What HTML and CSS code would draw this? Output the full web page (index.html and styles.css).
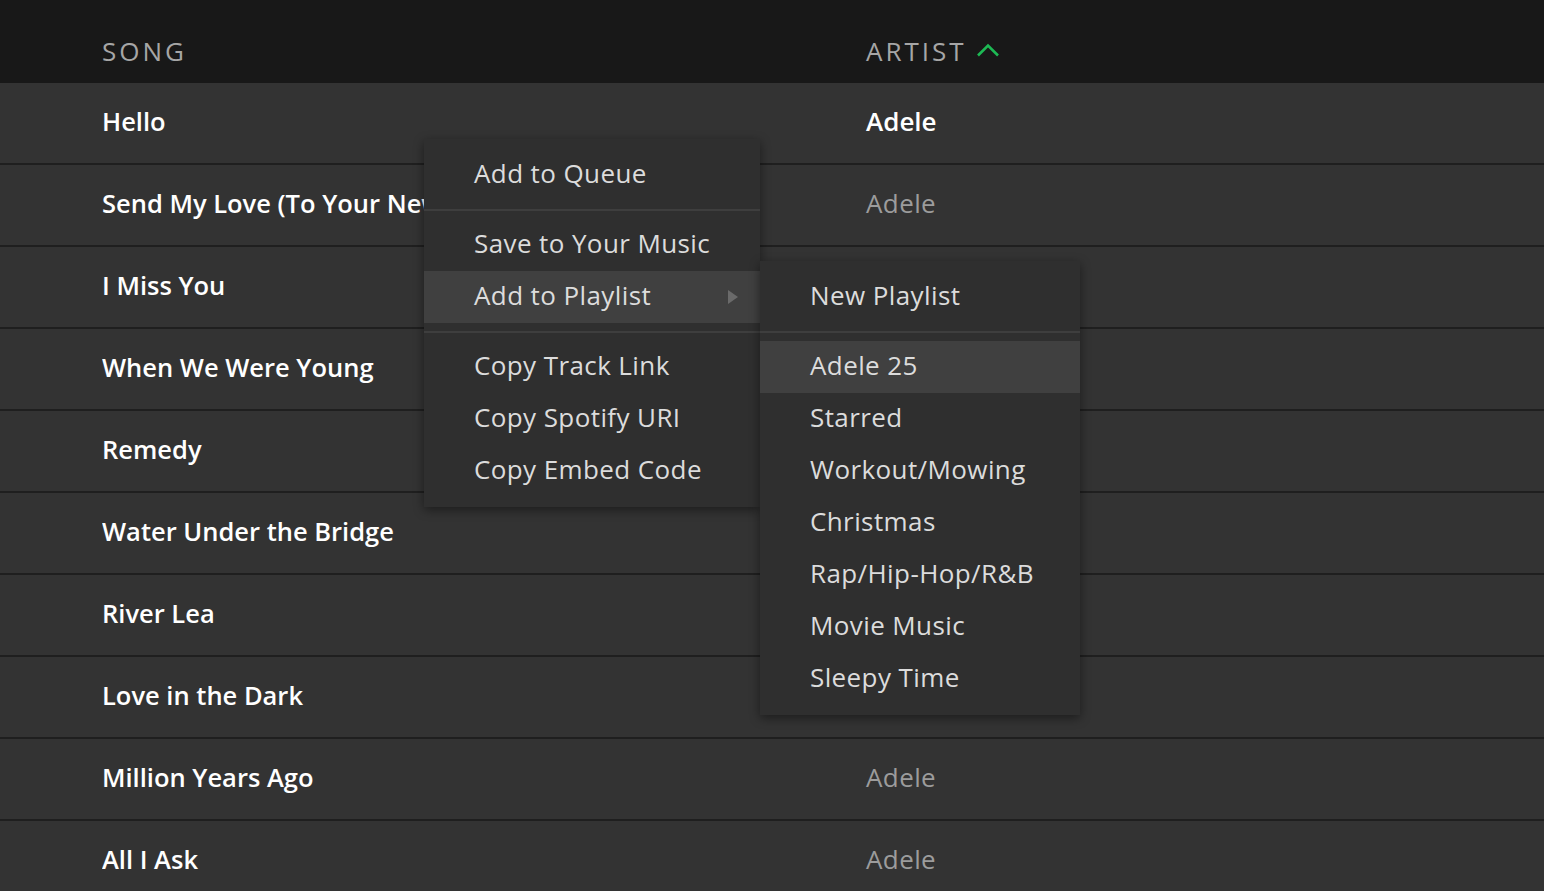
FILE: index.html
```html
<!DOCTYPE html>
<html lang="en">

<head>
    <meta charset="UTF-8">
    <meta name="viewport" content="width=device-width, initial-scale=1.0">
    <link rel="stylesheet" href="styles.css">
    <title>Tracks</title>
</head>

<body>

    <div class="tracklist">
        <div class="head">
            <div class="col-song">SONG</div>
            <div class="col-artist">ARTIST
                <svg class="sort" width="24" height="14" viewBox="0 0 24 14"><path d="M2 12.5 L12 2.5 L22 12.5" fill="none" stroke="#1db954" stroke-width="2.6"/></svg>
            </div>
        </div>
        <div class="row">
            <div class="col-song">Hello</div>
            <div class="col-artist active">Adele</div>
        </div>
        <div class="row">
            <div class="col-song">Send My Love (To Your New Lover)</div>
            <div class="col-artist">Adele</div>
        </div>
        <!-- artist cells under the open submenu are left blank -->
        <div class="row">
            <div class="col-song">I Miss You</div>
            <div class="col-artist"></div>
        </div>
        <div class="row">
            <div class="col-song">When We Were Young</div>
            <div class="col-artist"></div>
        </div>
        <div class="row">
            <div class="col-song">Remedy</div>
            <div class="col-artist"></div>
        </div>
        <div class="row">
            <div class="col-song">Water Under the Bridge</div>
            <div class="col-artist"></div>
        </div>
        <div class="row">
            <div class="col-song">River Lea</div>
            <div class="col-artist"></div>
        </div>
        <div class="row">
            <div class="col-song">Love in the Dark</div>
            <div class="col-artist"></div>
        </div>
        <div class="row">
            <div class="col-song">Million Years Ago</div>
            <div class="col-artist">Adele</div>
        </div>
        <div class="row">
            <div class="col-song">All I Ask</div>
            <div class="col-artist">Adele</div>
        </div>
    </div>

    <!-- context menu -->
    <ul class="menu main-menu">
        <li>Add to Queue</li>
        <li class="sep"></li>
        <li>Save to Your Music</li>
        <li class="hover has-sub">Add to Playlist<span class="arrow"></span></li>
        <li class="sep"></li>
        <li>Copy Track Link</li>
        <li>Copy Spotify URI</li>
        <li>Copy Embed Code</li>
    </ul>

    <ul class="menu sub-menu">
        <li>New Playlist</li>
        <li class="sep"></li>
        <li class="hover">Adele 25</li>
        <li>Starred</li>
        <li>Workout/Mowing</li>
        <li>Christmas</li>
        <li>Rap/Hip-Hop/R&amp;B</li>
        <li>Movie Music</li>
        <li>Sleepy Time</li>
    </ul>

</body>

</html>
```

FILE: styles.css
```css
* {
    margin: 0;
    padding: 0;
    box-sizing: border-box;
}

html,
body {
    height: 100%;
    overflow: hidden;
}

body {
    background-color: #333333;
    font-family: "Open Sans", "Liberation Sans", sans-serif;
    font-size: 26px;
    color: #ffffff;
}

.head {
    display: flex;
    align-items: center;
    height: 83px;
    padding-left: 102px;
    padding-top: 18px;
    background-color: #181818;
    color: #a6a6a6;
    font-size: 26px;
    letter-spacing: 3px;
}

.row {
    display: flex;
    align-items: center;
    height: 82px;
    padding-left: 102px;
    padding-bottom: 4px;
    background-color: #333333;
    border-bottom: 2px solid #1f1f1f;
}

.row .col-song {
    font-size: 25.5px;
    font-weight: 600;
}

.col-song {
    width: 764px;
    white-space: nowrap;
    overflow: hidden;
}

.col-artist {
    display: flex;
    align-items: center;
    gap: 9px;
}

.row .col-artist {
    color: #9c9c9c;
    letter-spacing: 0.4px;
}

.row .col-artist.active {
    color: #ffffff;
    font-weight: 600;
    letter-spacing: 0;
}

.sort {
    margin-top: -2px;
}

.menu {
    position: absolute;
    list-style: none;
    padding: 10px 0;
    background-color: #2f2f2f;
    color: #dcdcdc;
    letter-spacing: 0.4px;
    box-shadow: 0 3px 10px rgba(0, 0, 0, 0.45);
}

.main-menu {
    left: 424px;
    top: 139px;
    width: 336px;
}

.sub-menu {
    left: 760px;
    top: 261px;
    width: 320px;
}

.menu li {
    position: relative;
    height: 52px;
    line-height: 48px;
    padding-left: 50px;
    white-space: nowrap;
}

.menu li.sep {
    height: 18px;
    padding: 0;
}

.menu li.sep::after {
    content: "";
    position: absolute;
    left: 0;
    right: 0;
    top: 8px;
    height: 2px;
    background-color: #3e3e3e;
}

.menu li.hover {
    background-color: #404040;
}

.arrow {
    position: absolute;
    right: 22px;
    top: 19px;
    width: 0;
    height: 0;
    border-top: 7px solid transparent;
    border-bottom: 7px solid transparent;
    border-left: 10px solid #6a6a6a;
}
```
